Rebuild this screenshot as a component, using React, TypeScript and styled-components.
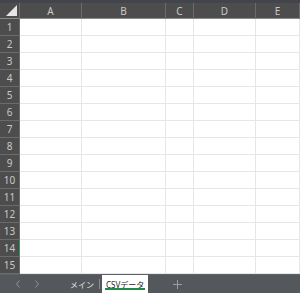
import React from "react";
import styled, { createGlobalStyle } from "styled-components";

const Global = createGlobalStyle`
  html, body { margin: 0; padding: 0; background: #ffffff; }
  body { font-family: "Noto Sans", "Noto Sans CJK JP", sans-serif; }
`;

const COLS: { label: string; width: string }[] = [
  { label: "A", width: "62px" },
  { label: "B", width: "84px" },
  { label: "C", width: "28px" },
  { label: "D", width: "62px" },
  { label: "E", width: "1fr" },
];
const TEMPLATE = `20px ${COLS.map((c) => c.width).join(" ")}`;
const ROWS = Array.from({ length: 15 }, (_, i) => i + 1);
const ACTIVE_ROW = 14;

const Frame = styled.div`
  width: 300px;
  height: 293px;
  display: flex;
  flex-direction: column;
  overflow: hidden;
  background: #ffffff;
`;

const TopBand = styled.div`
  height: 3px;
  background: #42464c;
  flex: none;
`;

const Sheet = styled.div`
  flex: 1;
  display: grid;
  grid-template-columns: ${TEMPLATE};
  grid-template-rows: 16px repeat(15, 17px);
  align-content: start;
  overflow: hidden;
`;

const Corner = styled.div`
  background: #4d4d4d;
  border-right: 1px solid #6b6b6b;
  border-bottom: 1px solid #8a8a8a;
  position: relative;
  &::after {
    content: "";
    position: absolute;
    right: 2px;
    bottom: 2px;
    width: 0;
    height: 0;
    border-left: 11px solid transparent;
    border-bottom: 11px solid #e6e6e6;
  }
`;

const ColHead = styled.div`
  background: #4d4d4d;
  border-right: 1px solid #6b6b6b;
  border-bottom: 1px solid #8a8a8a;
  color: #c9c9c9;
  font-size: 10px;
  display: flex;
  align-items: center;
  justify-content: center;
  line-height: 1;
`;

const RowHead = styled.div<{ $active?: boolean }>`
  background: #4d4d4d;
  border-bottom: 1px solid #6b6b6b;
  border-right: 1px solid ${(p) => (p.$active ? "#2f9a5a" : "#6b6b6b")};
  color: #c9c9c9;
  font-size: 10px;
  display: flex;
  align-items: center;
  justify-content: center;
  line-height: 1;
`;

const Cell = styled.div`
  background: #ffffff;
  border-right: 1px solid #e6e6e6;
  border-bottom: 1px solid #e6e6e6;
`;

const TabBar = styled.div`
  height: 19px;
  flex: none;
  background: #54585d;
  display: flex;
  align-items: stretch;
  border-top: 1px solid #5e6267;
  box-sizing: border-box;
  font-size: 8px;
`;

const Nav = styled.div`
  width: 54px;
  display: flex;
  align-items: center;
  justify-content: center;
  gap: 13px;
  color: #8f9398;
`;

const Tab = styled.div<{ $active?: boolean }>`
  display: flex;
  align-items: center;
  padding: ${(p) => (p.$active ? "0 4px" : "0 5px 0 16px")};
  margin-left: ${(p) => (p.$active ? "2px" : "0")};
  position: relative;
  color: ${(p) => (p.$active ? "#262626" : "#e4e4e4")};
  background: ${(p) => (p.$active ? "#ffffff" : "transparent")};
  ${(p) =>
    p.$active &&
    `&::after {
      content: "";
      position: absolute;
      left: 3px;
      right: 3px;
      bottom: 3px;
      height: 2px;
      background: #1f8a4c;
    }`}
`;

const Sep = styled.div`
  width: 1px;
  background: #8a8d91;
  margin: 4px 0;
`;

const Add = styled.div`
  margin-left: 25px;
  display: flex;
  align-items: center;
  color: #9a9da2;
`;

export default function App() {
  return (
    <Frame>
      <Global />
      <TopBand />
      <Sheet>
        <Corner />
        {COLS.map((c) => (
          <ColHead key={c.label}>{c.label}</ColHead>
        ))}
        {ROWS.map((r) => (
          <React.Fragment key={r}>
            <RowHead $active={r === ACTIVE_ROW}>{r}</RowHead>
            {COLS.map((c) => (
              <Cell key={c.label} />
            ))}
          </React.Fragment>
        ))}
      </Sheet>
      <TabBar>
        <Nav>
          <svg width="6" height="8" viewBox="0 0 6 8">
            <path d="M4.5 0.5 L1.5 4 L4.5 7.5" fill="none" stroke="currentColor" strokeWidth="1" />
          </svg>
          <svg width="6" height="8" viewBox="0 0 6 8">
            <path d="M1.5 0.5 L4.5 4 L1.5 7.5" fill="none" stroke="currentColor" strokeWidth="1" />
          </svg>
        </Nav>
        <Tab>メイン</Tab>
        <Sep />
        <Tab $active>CSVデータ</Tab>
        <Add>
          <svg width="9" height="9" viewBox="0 0 9 9">
            <path d="M4.5 0 V9 M0 4.5 H9" stroke="currentColor" strokeWidth="1" />
          </svg>
        </Add>
      </TabBar>
    </Frame>
  );
}
